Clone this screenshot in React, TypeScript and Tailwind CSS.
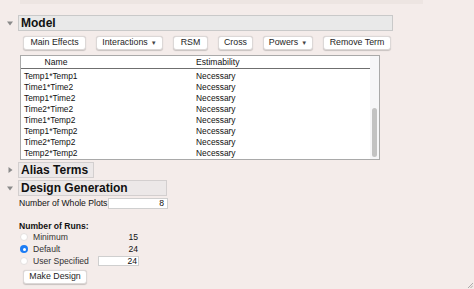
const rows = [
  "Temp1*Temp1",
  "Time1*Time2",
  "Temp1*Time2",
  "Time2*Time2",
  "Time1*Temp2",
  "Temp1*Temp2",
  "Time2*Temp2",
  "Temp2*Temp2",
];

function Down() {
  return (
    <svg width="6" height="5" viewBox="0 0 6 5" className="block">
      <path d="M0 0.5h6L3 4.5z" fill="#8a8a8a" />
    </svg>
  );
}

function Right() {
  return (
    <svg width="5" height="6" viewBox="0 0 5 6" className="block">
      <path d="M0.5 0v6L4.5 3z" fill="#8a8a8a" />
    </svg>
  );
}

function Btn({ label, w, menu }: { label: string; w: string; menu?: boolean }) {
  return (
    <div
      className={`${w} h-[14px] flex items-center justify-center gap-[3px] bg-white rounded-[3px] border border-[#dcd8d7] shadow-[0_0.5px_1px_rgba(0,0,0,0.18)] text-[8.8px] text-[#1e1e1e]`}
    >
      <span>{label}</span>
      {menu && <span className="text-[6px] text-[#444] leading-none">▼</span>}
    </div>
  );
}

function Radio({ on }: { on?: boolean }) {
  return on ? (
    <div className="w-[8px] h-[8px] rounded-full bg-[#1c7cf4] flex items-center justify-center">
      <div className="w-[3px] h-[3px] rounded-full bg-white" />
    </div>
  ) : (
    <div className="w-[8px] h-[8px] rounded-full bg-white border border-[#e4e0df]" />
  );
}

export default function App() {
  return (
    <div className="w-[474px] h-[289px] bg-[#f4ecea] flex flex-col font-['Liberation_Sans',Arial,sans-serif] text-[#111] overflow-hidden relative">
      {/* end of the outline box above */}
      <div className="h-[4px] ml-[20px] w-[403px] bg-[#ede5e2]" />

      {/* Model */}
      <div className="mt-[11px] h-[16px] flex items-center">
        <div className="w-[18px] flex justify-center pl-[1px]">
          <Down />
        </div>
        <div className="w-[375px] h-[16px] bg-[#e9e9e9] border border-[#c9c9c9] flex items-center pl-[2px] text-[12px] font-bold leading-none">
          Model
        </div>
      </div>

      <div className="mt-[5px] ml-[23px] flex gap-[10px]">
        <Btn label="Main Effects" w="w-[63px]" />
        <Btn label="Interactions" w="w-[67px]" menu />
        <Btn label="RSM" w="w-[35px]" />
        <Btn label="Cross" w="w-[35px]" />
        <Btn label="Powers" w="w-[50px]" menu />
        <Btn label="Remove Term" w="w-[68px]" />
      </div>

      {/* term list */}
      <div className="mt-[5px] ml-[20px] w-[360px] h-[105px] border border-[#a9a9a9] bg-[#f6f6f8] flex flex-col">
        <div className="h-[13px] flex items-center text-[8.6px] border-b border-[#6f6f6f] mr-[9px] bg-white">
          <div className="w-[70px] text-center">Name</div>
          <div className="pl-[105px]">Estimability</div>
        </div>
        <div className="flex-1 flex">
          <div className="flex-1 bg-white flex flex-col pt-[2px]">
            {rows.map((r) => (
              <div key={r} className="h-[11px] flex items-center text-[8.4px]">
                <div className="w-[175px] pl-[3px]">{r}</div>
                <div>Necessary</div>
              </div>
            ))}
          </div>
          <div className="w-[9px] flex flex-col pt-[39px] items-center">
            <div className="w-[5px] h-[49px] rounded-full bg-[#c2c2c2]" />
          </div>
        </div>
      </div>

      {/* Alias Terms */}
      <div className="mt-[2px] h-[16px] flex items-center">
        <div className="w-[18px] flex justify-center pl-[2px]">
          <Right />
        </div>
        <div className="w-[76px] h-[16px] bg-[#ece8e8] border border-[#d3cfcf] flex items-center pl-[2px] text-[12px] font-bold leading-none">
          Alias Terms
        </div>
      </div>

      {/* Design Generation */}
      <div className="mt-[2px] h-[16px] flex items-center">
        <div className="w-[18px] flex justify-center pl-[1px]">
          <Down />
        </div>
        <div className="w-[149px] h-[16px] bg-[#ece8e8] border border-[#d3cfcf] flex items-center pl-[2px] text-[12px] font-bold leading-none">
          Design Generation
        </div>
      </div>

      <div className="mt-[2px] ml-[19px] h-[11px] flex items-center text-[8.6px]">
        <div className="w-[89px]">Number of Whole Plots</div>
        <div className="w-[60px] h-[11px] bg-white border border-[#cfcfcf] flex items-center justify-end pr-[3px]">
          8
        </div>
      </div>

      <div className="mt-[12px] ml-[19px] h-[10px] flex items-center text-[8.6px] font-bold">
        Number of Runs:
      </div>

      <div className="ml-[20px] flex flex-col text-[8.6px]">
        <div className="h-[12px] flex items-center">
          <Radio />
          <div className="ml-[5px] w-[95px] text-[#333]">Minimum</div>
          <div className="w-[10px] text-right">15</div>
        </div>
        <div className="h-[12px] flex items-center">
          <Radio on />
          <div className="ml-[5px] w-[95px] text-[#333]">Default</div>
          <div className="w-[10px] text-right">24</div>
        </div>
        <div className="h-[12px] flex items-center">
          <Radio />
          <div className="ml-[5px] w-[65px] text-[#333]">User Specified</div>
          <div className="w-[41px] h-[10px] bg-white border border-[#cfcfcf] flex items-center justify-end pr-[1px]">
            24
          </div>
        </div>
      </div>

      <div className="mt-[3px] ml-[23px]">
        <Btn label="Make Design" w="w-[64px]" />
      </div>

      {/* resize grip */}
      <svg width="6" height="6" viewBox="0 0 6 6" className="absolute right-[1px] bottom-[1px]">
        <path d="M6 1L1 6M6 3.5L3.5 6" stroke="#9a9a9a" strokeWidth="0.8" />
      </svg>
    </div>
  );
}
